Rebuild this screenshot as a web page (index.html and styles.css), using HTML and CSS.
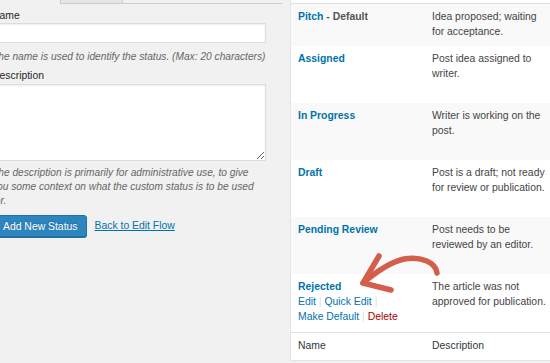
FILE: index.html
```html
<!DOCTYPE html>
<html lang="en">
<head>
    <meta charset="UTF-8">
    <meta name="viewport" content="width=device-width, initial-scale=1.0">
    <title>Custom Statuses</title>
    <link rel="stylesheet" href="styles.css">
</head>
<body>
    <div class="page">

        <!-- add new status form -->
        <div class="form-col">
            <div class="tabs">
                <span class="tab tab-active"></span>
                <span class="tab"></span>
                <span class="tab-line"></span>
            </div>
            <label class="field-label" for="status-name">Name</label>
            <input type="text" id="status-name" class="field-input"/>
            <p class="hint">The name is used to identify the status. (Max: 20 characters)</p>
            <label class="field-label label-desc" for="status-desc">Description</label>
            <textarea id="status-desc" class="field-area"></textarea>
            <p class="hint hint-desc">The description is primarily for administrative use, to give you some context on what the custom status is to be used for.</p>
            <div class="form-actions">
                <button type="button" class="btn-primary">Add New Status</button>
                <a href="#" class="back-link">Back to Edit Flow</a>
            </div>
        </div>

        <!-- status list -->
        <div class="list-col">
            <table class="status-table">
                <thead>
                    <tr class="head-strip"><td colspan="2"></td></tr>
                </thead>
                <tbody>
                    <tr class="alt">
                        <td class="col-name"><a href="#" class="row-title">Pitch</a> <strong class="default">- Default</strong></td>
                        <td class="col-desc">Idea proposed; waiting for acceptance.</td>
                    </tr>
                    <tr>
                        <td class="col-name"><div class="name-cell"><a href="#" class="row-title">Assigned</a></div></td>
                        <td class="col-desc">Post idea assigned to writer.</td>
                    </tr>
                    <tr class="alt">
                        <td class="col-name"><div class="name-cell"><a href="#" class="row-title">In Progress</a></div></td>
                        <td class="col-desc">Writer is working on the post.</td>
                    </tr>
                    <tr>
                        <td class="col-name"><div class="name-cell"><a href="#" class="row-title">Draft</a></div></td>
                        <td class="col-desc">Post is a draft; not ready for review or publication.</td>
                    </tr>
                    <tr class="alt">
                        <td class="col-name"><div class="name-cell"><a href="#" class="row-title">Pending Review</a></div></td>
                        <td class="col-desc">Post needs to be reviewed by an editor.</td>
                    </tr>
                    <tr>
                        <td class="col-name">
                            <div class="name-cell">
                                <a href="#" class="row-title">Rejected</a>
                                <div class="row-actions">
                                    <span class="act"><a href="#">Edit</a> <i class="sep">|</i></span>
                                    <span class="act"><a href="#">Quick Edit</a> <i class="sep">|</i></span>
                                    <span class="act"><a href="#">Make Default</a> <i class="sep">|</i></span>
                                    <span class="act"><a href="#" class="delete">Delete</a></span>
                                </div>
                            </div>
                        </td>
                        <td class="col-desc">The article was not approved for publication.</td>
                    </tr>
                </tbody>
                <tfoot>
                    <tr>
                        <td class="col-name">Name</td>
                        <td class="col-desc">Description</td>
                    </tr>
                </tfoot>
            </table>
        </div>

        <!-- hand drawn arrow pointing at the row actions -->
        <svg class="arrow" width="95" height="52" viewBox="0 0 95 52">
            <path d="M83,25 C82,14 66,8 50,11 C36,14 22,24 9,35" fill="none" stroke="#d35f4a" stroke-width="5.5" stroke-linecap="round"/>
            <path d="M25,8 L9,35 L37,42" fill="none" stroke="#d35f4a" stroke-width="5.5" stroke-linecap="round" stroke-linejoin="round"/>
        </svg>
    </div>
</body>
</html>
```

FILE: styles.css
```css
html, body {
    overflow: hidden;
}
body {
    margin: 0;
    background-color: #f1f1f1;
    font-family: "Liberation Sans", Arial, sans-serif;
    font-size: 10.4px;
    line-height: 14.7px;
    color: #444;
}
a {
    color: #0073aa;
    text-decoration: none;
}
.page {
    position: relative;
    display: flex;
    align-items: flex-start;
}

/* form column */
.form-col {
    width: 298px;
    margin-left: -8px;
    flex-shrink: 0;
}
.tabs {
    display: flex;
    height: 4px;
    margin-right: 8px;
}
.tab {
    box-sizing: border-box;
    width: 63px;
    height: 4px;
    background-color: #e5e5e5;
    border: 1px solid #ccc;
    border-top: none;
}
.tab-active {
    width: 68px;
    background-color: transparent;
    border: none;
}
.tab-line {
    flex: 1;
    border-bottom: 1px solid #ccc;
}
.field-label {
    display: block;
    margin-top: 4px;
    line-height: 15px;
    color: #23282d;
}
.label-desc {
    margin-top: 4px;
}
.field-input,
.field-area {
    display: block;
    box-sizing: border-box;
    width: 274px;
    margin: 0;
    background-color: #fff;
    border: 1px solid #ddd;
    box-shadow: inset 0 1px 2px rgba(0, 0, 0, 0.07);
    font-family: inherit;
}
.field-input {
    height: 20px;
}
.field-area {
    height: 77px;
    margin-top: 1px;
}
.hint {
    width: 280px;
    margin: 7px 0 0;
    font-size: 10.2px;
    font-style: italic;
    line-height: 14px;
    color: #666;
}
.hint-desc {
    width: 272px;
    margin-top: 5px;
}
.form-actions {
    display: flex;
    align-items: center;
    margin-top: 7px;
}
.btn-primary {
    box-sizing: border-box;
    height: 22px;
    padding: 0 8px 0 10px;
    background-color: #2e85be;
    border: 1px solid #1f6fa3;
    border-radius: 3px;
    box-shadow: 0 1px 0 #1f6fa3;
    color: #fff;
    font-family: inherit;
    font-size: 10.4px;
    text-shadow: 0 -1px 1px #1f6fa3;
}
.back-link {
    margin-left: 8px;
    text-decoration: underline;
}

/* status list */
.list-col {
    flex-shrink: 0;
}
.status-table {
    border-collapse: collapse;
    background-color: #fff;
    border-left: 1px solid #e5e5e5;
    border-bottom: 1px solid #e5e5e5;
    box-shadow: 0 1px 1px rgba(0, 0, 0, 0.04);
}
.status-table td {
    vertical-align: top;
    padding: 6px 8px 7px;
}
.status-table .head-strip td {
    height: 3px;
    padding: 0;
    border-bottom: 1px solid #e1e1e1;
}
.status-table .col-name {
    width: 118px;
    padding-left: 7px;
}
.status-table .col-desc {
    width: 117px;
}
.alt {
    background-color: #f9f9f9;
}
.name-cell {
    min-height: 44px;
}
.row-title {
    font-weight: bold;
}
.default {
    color: #555;
}
.row-actions .act {
    white-space: nowrap;
}
.sep {
    font-style: normal;
    color: #ddd;
}
.delete {
    color: #a00;
}
.status-table tfoot td {
    border-top: 1px solid #e1e1e1;
    color: #32373c;
}

/* annotation */
.arrow {
    position: absolute;
    left: 354px;
    top: 248px;
}
```
